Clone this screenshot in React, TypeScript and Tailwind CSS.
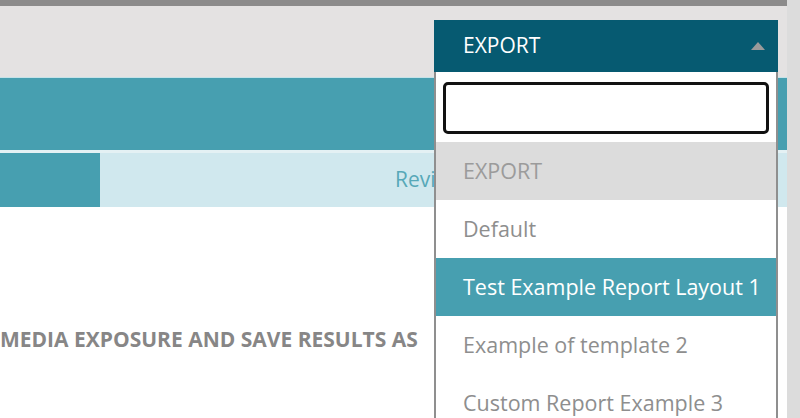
import { useState } from "react";

const options = [
  "EXPORT",
  "Default",
  "Test Example Report Layout 1",
  "Example of template 2",
  "Custom Report Example 3",
];

export default function App() {
  const [query, setQuery] = useState("");
  const selected = 2;

  return (
    <main
      className="relative flex h-[418px] w-[800px] overflow-hidden bg-white"
      style={{ fontFamily: "'Open Sans', Lato, sans-serif" }}
    >
      <div className="flex w-[787px] flex-col">
        <div className="h-[6px] bg-[#8c8b8b]" />
        <div className="h-[72px] border-b border-[#c5e2e8] bg-[#e4e2e2]" />
        <div className="h-[72px] bg-[#479fb0]" />
        <div className="h-[3px] bg-[#e4f1f4]" />
        <div className="flex h-[54px] bg-[#d0e8ee]">
          <div className="w-[100px] bg-[#479fb0]" />
          <div className="flex flex-1 items-center pl-[295px] text-[21px] text-[#57a8b8]">Review</div>
        </div>
        <div className="pt-[117px] text-[21px] font-bold text-[#878686] whitespace-nowrap">
          MEDIA EXPOSURE AND SAVE RESULTS AS
        </div>
      </div>
      <div className="w-[13px] bg-[#dcdcdc]" />

      {/* export dropdown, open */}
      <div className="absolute left-[434px] top-[20px] w-[344px]">
        <button className="flex h-[52px] w-full items-center justify-between bg-[#065a71] pl-[29px] pr-[13px] text-[21px] text-white">
          <span>EXPORT</span>
          <svg width="14" height="8" viewBox="0 0 14 8">
            <polygon points="7,0 14,8 0,8" fill="#9a9a9a" />
          </svg>
        </button>
        <div className="border-x-2 border-[#8f8f8f] bg-white">
          <div className="px-[7px] pt-[10px] pb-[8px]">
            <input
              value={query}
              onChange={(e) => setQuery(e.target.value)}
              className="h-[52px] w-full rounded-[5px] border-[3px] border-[#111] bg-white px-2 outline-none"
            />
          </div>
          {options.map((o, i) => (
            <div
              key={o}
              className={
                i === 0
                  ? "flex h-[58px] items-center bg-[#dcdcdc] pl-[27px] text-[21.5px] text-[#9b9b9b]"
                  : i === selected
                  ? "flex h-[58px] items-center bg-[#479fb0] pl-[27px] text-[21.5px] text-white"
                  : "flex h-[58px] items-center pl-[27px] text-[21.5px] text-[#8e8e8e]"
              }
            >
              {o}
            </div>
          ))}
        </div>
      </div>
    </main>
  );
}
